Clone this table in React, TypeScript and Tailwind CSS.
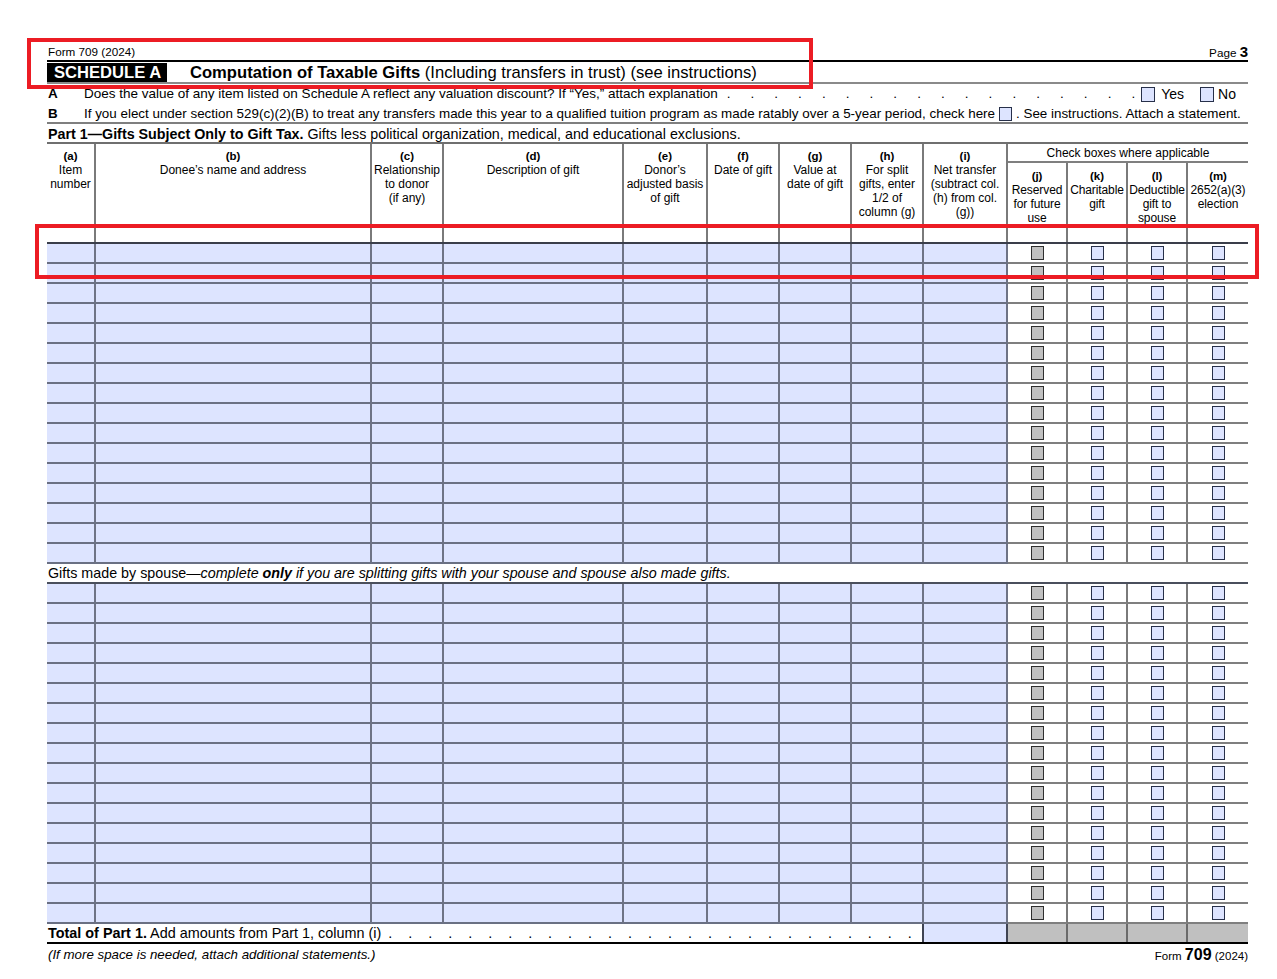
import React from "react";

const dataCols = [
  "w-[49px]",
  "w-[276px]",
  "w-[72px]",
  "w-[180px]",
  "w-[84px]",
  "w-[72px]",
  "w-[72px]",
  "w-[72px]",
  "w-[84px]",
];

function Box({ gray, big }: { gray?: boolean; big?: boolean }) {
  return (
    <div
      className={`${big ? "w-[14px] h-[15px]" : "w-[13px] h-[14px]"} border ${
        gray ? "bg-[#c0c0c0] border-[#2e2e2e]" : "bg-[#dde4ff] border-[#27304a]"
      }`}
    />
  );
}

function Dots({ n }: { n: number }) {
  return (
    <>
      {Array.from({ length: n }).map((_, i) => (
        <span key={i}>.</span>
      ))}
    </>
  );
}

function DataRow() {
  return (
    <div className="flex h-[20px]">
      {dataCols.map((c, i) => (
        <div
          key={i}
          className={`${c} h-full bg-[#dde4ff] border-r-2 border-b-2 border-r-[#6e7385] border-b-[#6a7083]`}
        />
      ))}
      {[0, 1, 2, 3].map((i) => (
        <div
          key={i}
          className={`w-[60px] h-full flex items-center justify-center border-b-2 border-b-[#7f7f7f] ${
            i < 3 ? "border-r-2 border-r-[#7a7a7a]" : ""
          }`}
        >
          <Box gray={i === 0} />
        </div>
      ))}
    </div>
  );
}

function HCell({
  w,
  label,
  lines,
  last,
}: {
  w: string;
  label: string;
  lines: string[];
  last?: boolean;
}) {
  return (
    <div
      className={`${w} h-full flex flex-col items-center pt-[5px] text-[12px] leading-[14px] text-center ${
        last ? "" : "border-r-2 border-r-[#7a7a7a]"
      }`}
    >
      <span className="font-bold text-[11.5px]">{label}</span>
      {lines.map((l, i) => (
        <span key={i} className="whitespace-nowrap">
          {l}
        </span>
      ))}
    </div>
  );
}

function SubCell({ label, lines, last }: { label: string; lines: string[]; last?: boolean }) {
  return (
    <div
      className={`w-[60px] h-full flex flex-col items-center pt-[6px] text-[12px] leading-[14px] text-center tracking-[-0.1px] ${
        last ? "" : "border-r-2 border-r-[#7a7a7a]"
      }`}
    >
      <span className="font-bold text-[11.5px]">{label}</span>
      {lines.map((l, i) => (
        <span key={i} className="whitespace-nowrap">
          {l}
        </span>
      ))}
    </div>
  );
}

export default function App() {
  return (
    <div className="relative w-[1277px] h-[979px] bg-white text-black font-['Liberation_Sans',Arial,sans-serif] overflow-hidden">
      <div className="ml-[47px] w-[1201px] pt-[42px]">
        {/* top line */}
        <div className="flex items-center justify-between h-[20px] pt-[2px] border-b-2 border-black text-[11.7px]">
          <span className="pl-[1px]">Form 709 (2024)</span>
          <span>
            Page <b className="text-[15px]">3</b>
          </span>
        </div>

        {/* schedule row */}
        <div className="flex items-start h-[22px] border-b-2 border-b-[#8a8a8a]">
          <div className="mt-[1px] h-[19px] w-[120px] bg-black text-white font-bold text-[16.6px] leading-[19px] pl-[7px] whitespace-nowrap">
            SCHEDULE A
          </div>
          <div className="ml-[23px] text-[16.6px] leading-[20px] pt-[1px] whitespace-nowrap">
            <b>Computation of Taxable Gifts</b> (Including transfers in trust) (see instructions)
          </div>
        </div>

        {/* row A */}
        <div className="flex items-center h-[19px] pt-[2px] text-[13.5px]">
          <span className="w-[37px] pl-[1px] font-bold">A</span>
          <span className="whitespace-nowrap">
            Does the value of any item listed on Schedule A reflect any valuation discount? If “Yes,” attach explanation
          </span>
          <span className="flex-1 flex justify-between pl-[9px] pr-[6px]">
            <Dots n={18} />
          </span>
          <div className="flex items-center text-[14px] pr-[12px]">
            <Box big />
            <span className="ml-[6px]">Yes</span>
            <span className="ml-[16px]">
              <Box big />
            </span>
            <span className="ml-[4px]">No</span>
          </div>
        </div>

        {/* row B */}
        <div className="flex items-center h-[21px] pt-[3px] border-b-2 border-b-[#7f7f7f] text-[13.4px]">
          <span className="w-[37px] pl-[1px] font-bold">B</span>
          <span className="whitespace-nowrap flex items-center">
            If you elect under section 529(c)(2)(B) to treat any transfers made this year to a qualified tuition program as made
            ratably over a 5-year period, check here
            <span className="mx-[4px]">
              <Box />
            </span>
            . See instructions. Attach a statement.
          </span>
        </div>

        {/* Part 1 */}
        <div className="flex items-center h-[20px] pt-[3px] border-b-2 border-b-[#6f6f6f] text-[14.3px] whitespace-nowrap">
          <span className="pl-[1px]">
            <b>Part 1—Gifts Subject Only to Gift Tax.</b> Gifts less political organization, medical, and educational
            exclusions.
          </span>
        </div>

        {/* header */}
        <div className="flex h-[100px] border-b-2 border-b-[#3a3e4a]">
          <HCell w="w-[49px]" label="(a)" lines={["Item", "number"]} />
          <HCell w="w-[276px]" label="(b)" lines={["Donee’s name and address"]} />
          <HCell w="w-[72px]" label="(c)" lines={["Relationship", "to donor", "(if any)"]} />
          <HCell w="w-[180px]" label="(d)" lines={["Description of gift"]} />
          <HCell w="w-[84px]" label="(e)" lines={["Donor’s", "adjusted basis", "of gift"]} />
          <HCell w="w-[72px]" label="(f)" lines={["Date of gift"]} />
          <HCell w="w-[72px]" label="(g)" lines={["Value at", "date of gift"]} />
          <HCell w="w-[72px]" label="(h)" lines={["For split", "gifts, enter", "1/2 of", "column (g)"]} />
          <HCell w="w-[84px]" label="(i)" lines={["Net transfer", "(subtract col.", "(h) from col.", "(g))"]} />
          <div className="w-[240px] h-full flex flex-col">
            <div className="h-[19px] border-b-2 border-b-[#7f7f7f] flex items-center justify-center text-[12px]">
              Check boxes where applicable
            </div>
            <div className="flex flex-1">
              <SubCell label="(j)" lines={["Reserved", "for future", "use"]} />
              <SubCell label="(k)" lines={["Charitable", "gift"]} />
              <SubCell label="(l)" lines={["Deductible", "gift to", "spouse"]} />
              <SubCell label="(m)" lines={["2652(a)(3)", "election"]} last />
            </div>
          </div>
        </div>

        {/* part 1 rows */}
        {Array.from({ length: 16 }).map((_, i) => (
          <DataRow key={i} />
        ))}

        {/* spouse */}
        <div className="flex items-center h-[20px] pt-[2px] border-b-2 border-b-[#4a4f5c] text-[14.3px] whitespace-nowrap">
          <span className="pl-[1px]">
            Gifts made by spouse—
            <i>
              complete <b>only</b> if you are splitting gifts with your spouse and spouse also made gifts.
            </i>
          </span>
        </div>

        {Array.from({ length: 17 }).map((_, i) => (
          <DataRow key={i} />
        ))}

        {/* total */}
        <div className="flex h-[20px] border-b-2 border-b-black">
          <div className="w-[877px] h-full flex items-center pt-[2px] border-r-2 border-r-[#3f4352] text-[14.4px] whitespace-nowrap">
            <span className="pl-[1px]">
              <b>Total of Part 1.</b> Add amounts from Part 1, column (i)
            </span>
            <span className="flex-1 flex justify-between pl-[7px] pr-[10px]">
              <Dots n={27} />
            </span>
          </div>
          <div className="w-[84px] h-full bg-[#dde4ff] border-r-2 border-r-[#3f4352]" />
          <div className="w-[60px] h-full bg-[#c0c0c0] border-r-2 border-r-[#6a6a6a]" />
          <div className="w-[60px] h-full bg-[#c0c0c0] border-r-2 border-r-[#6a6a6a]" />
          <div className="w-[60px] h-full bg-[#c0c0c0] border-r-2 border-r-[#6a6a6a]" />
          <div className="w-[60px] h-full bg-[#c0c0c0]" />
        </div>

        {/* footer */}
        <div className="flex items-center justify-between h-[20px] pt-[2px]">
          <i className="text-[13.3px] pl-[1px]">(If more space is needed, attach additional statements.)</i>
          <span className="text-[11.5px]">
            Form <b className="text-[16px]">709</b> (2024)
          </span>
        </div>
      </div>

      {/* annotation overlays */}
      <div className="absolute left-[27px] top-[38px] w-[786px] h-[51px] border-4 border-[#ec1c24] pointer-events-none" />
      <div className="absolute left-[35px] top-[224px] w-[1224px] h-[55px] border-4 border-[#ec1c24] pointer-events-none" />
    </div>
  );
}
